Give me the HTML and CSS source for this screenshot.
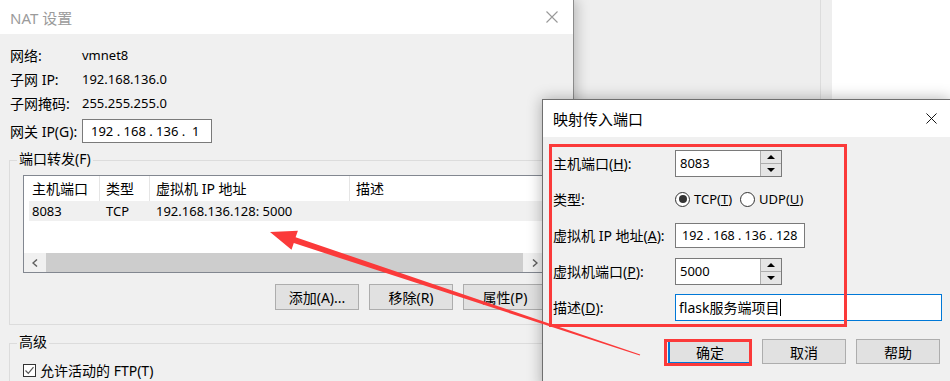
FILE: index.html
```html
<!DOCTYPE html>
<html lang="zh-CN">
<head>
    <meta charset="UTF-8">
    <meta name="viewport" content="width=device-width, initial-scale=1.0">
    <title>NAT 设置</title>
    <link rel="stylesheet" href="styles.css">
</head>
<body>
<div class="desktop">
    <!-- NAT 设置窗口 -->
    <section class="nat">
        <div class="nat-title">
            <span>NAT 设置</span>
            <svg class="close" viewBox="0 0 12 12"><path d="M0.5 0.5L11.5 11.5M11.5 0.5L0.5 11.5"/></svg>
        </div>
        <div class="nat-body">
            <div class="info-row"><span class="info-label">网络:</span><span class="info-val">vmnet8</span></div>
            <div class="info-row"><span class="info-label">子网 IP:</span><span class="info-val">192.168.136.0</span></div>
            <div class="info-row"><span class="info-label">子网掩码:</span><span class="info-val">255.255.255.0</span></div>
            <div class="info-row gateway"><span class="info-label">网关 IP(G):</span><div class="ip-box">192 . 168 . 136 .  1</div></div>

            <fieldset class="group forward">
                <legend>端口转发(F)</legend>
                <div class="listview">
                    <div class="lv-head">
                        <span>主机端口</span><span>类型</span><span>虚拟机 IP 地址</span><span>描述</span>
                    </div>
                    <div class="lv-row">
                        <span>8083</span><span>TCP</span><span>192.168.136.128: 5000</span><span></span>
                    </div>
                    <div class="lv-empty"></div>
                    <div class="hscroll">
                        <span class="sb-btn"><svg viewBox="0 0 6 8"><path d="M5 0.5L1 4L5 7.5"/></svg></span>
                        <span class="sb-thumb"></span>
                        <span class="sb-btn"><svg viewBox="0 0 6 8"><path d="M1 0.5L5 4L1 7.5"/></svg></span>
                    </div>
                </div>
                <div class="btn-row">
                    <button class="btn">添加(A)...</button>
                    <button class="btn">移除(R)</button>
                    <button class="btn">属性(P)</button>
                </div>
            </fieldset>

            <fieldset class="group advanced">
                <legend>高级</legend>
                <label class="check">
                    <span class="check-box"><svg viewBox="0 0 11 11"><path d="M1.5 5.5L4.3 8.3L9.5 2.2"/></svg></span>
                    允许活动的 FTP(T)
                </label>
            </fieldset>
        </div>
    </section>

    <!-- 后面的窗口 -->
    <div class="back-win">
        <div class="back-pane"></div>
        <div class="back-strip"></div>
    </div>

    <!-- 映射传入端口 -->
    <section class="portmap">
        <div class="pm-title">
            <span>映射传入端口</span>
            <svg class="close" viewBox="0 0 12 12"><path d="M0.5 0.5L11.5 11.5M11.5 0.5L0.5 11.5"/></svg>
        </div>
        <div class="pm-form">
            <label>主机端口(<u>H</u>):</label>
            <div class="spin">
                <span class="spin-val">8083</span>
                <span class="spin-btns">
                    <span><svg viewBox="0 0 8 4"><path d="M0 4L4 0L8 4Z"/></svg></span>
                    <span><svg viewBox="0 0 8 4"><path d="M0 0L8 0L4 4Z"/></svg></span>
                </span>
            </div>

            <label>类型:</label>
            <div class="radios">
                <span class="radio on"></span><span class="radio-text">TCP(<u>T</u>)</span>
                <span class="radio"></span><span class="radio-text">UDP(<u>U</u>)</span>
            </div>

            <label>虚拟机 IP 地址(<u>A</u>):</label>
            <div class="pm-ip">192 . 168 . 136 . 128</div>

            <label>虚拟机端口(<u>P</u>):</label>
            <div class="spin">
                <span class="spin-val">5000</span>
                <span class="spin-btns">
                    <span><svg viewBox="0 0 8 4"><path d="M0 4L4 0L8 4Z"/></svg></span>
                    <span><svg viewBox="0 0 8 4"><path d="M0 0L8 0L4 4Z"/></svg></span>
                </span>
            </div>

            <label>描述(<u>D</u>):</label>
            <div class="pm-desc">flask服务端项目<span class="caret"></span></div>
        </div>
        <div class="pm-buttons">
            <button class="btn btn-default">确定</button>
            <button class="btn">取消</button>
            <button class="btn">帮助</button>
        </div>
    </section>

    <!-- 红色标注 -->
    <div class="mark mark-form"></div>
    <div class="mark mark-ok"></div>
    <svg class="mark-arrow" viewBox="0 0 950 381">
        <polygon points="270,232 297.9,230.7 295.6,237.3 640.2,354.5 639.8,355.5 293.8,243.1 291.5,249.7"/>
    </svg>
</div>
</body>
</html>
```

FILE: styles.css
```css
* {
    box-sizing: border-box;
}

body {
    margin: 0;
    background: #fff;
    font-family: "Noto Sans", "Noto Sans CJK SC", sans-serif;
    font-size: 14px;
    color: #000;
}

.desktop {
    position: relative;
    display: flex;
    width: 950px;
    height: 381px;
    overflow: hidden;
}

/* NAT 设置窗口 */
.nat {
    flex: none;
    width: 574px;
    height: 381px;
    background: #f0f0f0;
    border-right: 1px solid #8c8c8c;
    box-shadow: 3px 0 12px rgba(0, 0, 0, 0.22);
    position: relative;
    z-index: 1;
}

.nat-title {
    height: 34px;
    background: #fff;
    display: flex;
    align-items: center;
    justify-content: space-between;
    padding: 0 15px 0 10px;
    color: #9b9b9b;
    font-size: 15px;
}

.close {
    width: 12px;
    height: 12px;
    fill: none;
    stroke: #999;
    stroke-width: 1.1;
}

.nat-body {
    padding-top: 9px;
}

.info-row {
    display: flex;
    align-items: center;
    height: 24px;
    padding-left: 10px;
}

.info-label {
    flex: none;
    width: 72px;
}

.info-val {
    font-size: 13px;
}

.gateway {
    margin-top: 4px;
}

.ip-box {
    width: 130px;
    height: 24px;
    border: 1px solid #7a7a7a;
    background: #fff;
    padding-left: 8px;
    font-size: 13px;
    line-height: 22px;
    white-space: pre;
}

/* 分组框 */
.group {
    margin: 6px 9px 0 9px;
    border: 1px solid #dcdcdc;
    padding: 3px 16px 14px 13px;
    min-inline-size: 0;
}

.group legend {
    margin-left: -6px;
    padding: 0 2px 3px;
    line-height: 20px;
}

.listview {
    height: 98px;
    background: #fff;
    border: 1px solid #828790;
    display: flex;
    flex-direction: column;
}

.lv-head {
    display: grid;
    grid-template-columns: 76px 50px 200px 1fr;
    height: 25px;
}

.lv-head span {
    border-right: 1px solid #e5e5e5;
    padding-left: 6px;
    line-height: 25px;
}

.lv-head span:first-child {
    padding-left: 8px;
}

.lv-row {
    display: grid;
    grid-template-columns: 71px 50px 200px 1fr;
    height: 20px;
    margin-left: 5px;
    background: #f0f0f0;
    font-size: 13px;
    line-height: 20px;
}

.lv-row span {
    padding-left: 6px;
}

.lv-row span:first-child {
    padding-left: 3px;
}

.lv-empty {
    flex: 1;
}

.hscroll {
    display: flex;
    height: 19px;
    background: #f0f0f0;
}

.sb-btn {
    width: 22px;
    display: flex;
    align-items: center;
    justify-content: center;
}

.sb-btn:last-child {
    width: 23px;
}

.sb-btn svg {
    width: 6px;
    height: 8px;
    fill: none;
    stroke: #606060;
    stroke-width: 1.5;
}

.sb-thumb {
    flex: 1;
    background: #cdcdcd;
}

.btn-row {
    display: flex;
    justify-content: flex-end;
    gap: 10px;
    margin-top: 11px;
}

.btn {
    width: 84px;
    height: 26px;
    padding: 0;
    background: #e1e1e1;
    border: 1px solid #adadad;
    font: inherit;
    color: #000;
}

.advanced {
    margin-top: 7px;
    padding-top: 4px;
}

.check {
    display: flex;
    align-items: center;
    gap: 4px;
    height: 20px;
    margin-top: 1px;
}

.check-box {
    width: 13px;
    height: 13px;
    border: 1px solid #333;
    background: #fff;
    display: flex;
}

.check-box svg {
    width: 11px;
    height: 11px;
    fill: none;
    stroke: #555;
    stroke-width: 1.2;
}

/* 后面的窗口 */
.back-win {
    flex: 1;
    display: flex;
    height: 99px;
}

.back-pane {
    width: 247px;
    background: #eee;
    border-right: 1px solid #dcdcdc;
}

.back-strip {
    width: 11px;
    background: #eee;
}

/* 映射传入端口 对话框 */
.portmap {
    position: absolute;
    left: 542px;
    top: 99px;
    width: 408px;
    height: 290px;
    background: #f0f0f0;
    border-left: 1px solid #6f6f6f;
    border-top: 1px solid #6f6f6f;
    box-shadow: 0 0 14px rgba(0, 0, 0, 0.3);
    z-index: 2;
}

.pm-title {
    height: 37px;
    background: #fff;
    display: flex;
    align-items: center;
    justify-content: space-between;
    padding: 0 13px 0 10px;
    font-size: 15px;
}

.pm-title .close {
    width: 11px;
    height: 11px;
    stroke: #000;
    stroke-width: 1;
}

.pm-form {
    display: grid;
    grid-template-columns: 122px auto;
    grid-auto-rows: 36px;
    align-items: center;
    justify-items: start;
    padding: 8px 0 0 10px;
}

.spin {
    display: flex;
    width: 107px;
    height: 27px;
    border: 1px solid #7a7a7a;
    background: #fff;
}

.spin-val {
    flex: 1;
    padding-left: 4px;
    font-size: 13px;
    line-height: 25px;
}

.spin-btns {
    width: 21px;
    display: flex;
    flex-direction: column;
    border-left: 1px solid #adadad;
}

.spin-btns span {
    flex: 1;
    background: #e5e5e5;
    display: flex;
    align-items: center;
    justify-content: center;
}

.spin-btns span + span {
    border-top: 1px solid #adadad;
}

.spin-btns svg {
    width: 8px;
    height: 4px;
    fill: #000;
}

.radios {
    display: flex;
    align-items: center;
    font-size: 13px;
}

.radio {
    width: 15px;
    height: 15px;
    border: 1px solid #333;
    border-radius: 50%;
    background: #fff;
    margin-right: 4px;
    display: flex;
    align-items: center;
    justify-content: center;
}

.radio.on::after {
    content: "";
    width: 8px;
    height: 8px;
    border-radius: 50%;
    background: #333;
}

.radio-text + .radio {
    margin-left: 8px;
}

.pm-ip {
    width: 130px;
    height: 25px;
    border: 1px solid #7a7a7a;
    background: #fff;
    padding-left: 6px;
    font-size: 12.5px;
    line-height: 23px;
    white-space: pre;
}

.pm-desc {
    width: 267px;
    height: 27px;
    border: 1px solid #0078d7;
    background: #fff;
    padding-left: 3px;
    display: flex;
    align-items: center;
}

.caret {
    width: 1px;
    height: 17px;
    background: #000;
    margin-left: 1px;
}

.pm-buttons {
    display: flex;
    gap: 10px;
    padding-left: 125px;
    margin-top: 14px;
}

.pm-buttons .btn {
    height: 25px;
}

.btn-default {
    border-color: #0078d7;
    box-shadow: inset 0 0 0 1px #0078d7;
}

/* 红色标注 */
.mark {
    position: absolute;
    border: 3px solid #fb3a3a;
    z-index: 3;
}

.mark-form {
    left: 549px;
    top: 144px;
    width: 298px;
    height: 183px;
}

.mark-ok {
    left: 664px;
    top: 339px;
    width: 88px;
    height: 27px;
}

.mark-arrow {
    position: absolute;
    left: 0;
    top: 0;
    width: 950px;
    height: 381px;
    fill: #fb3a3a;
    z-index: 4;
}
```
